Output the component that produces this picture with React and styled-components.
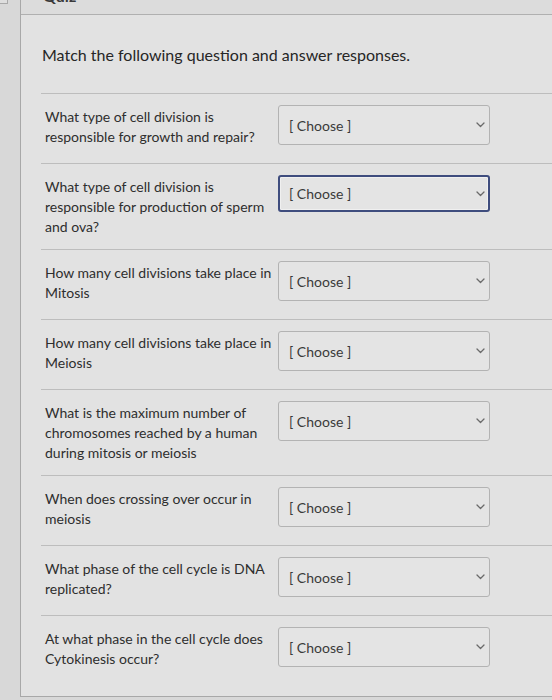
import React from "react";
import styled, { createGlobalStyle } from "styled-components";

const Global = createGlobalStyle`
  html, body { margin: 0; padding: 0; background: #d8d8d8; overflow: hidden; }
  body { font-family: Lato, "Open Sans", sans-serif; color: #2c2c2c; }
  * { box-sizing: border-box; }
`;

const Page = styled.div`
  display: flex;
  width: 552px;
  height: 700px;
  background: #d8d8d8;
`;

const Gutter = styled.div`
  width: 20px;
  flex: none;
`;

const Flag = styled.div`
  width: 8px;
  height: 4px;
  border: 1px solid #a9a9a9;
  border-top: none;
  border-left: none;
  background: #dedede;
`;

const Card = styled.div`
  flex: 1;
  height: 697px;
  background: #e2e2e2;
  border-left: 1px solid #a8a8a8;
  border-bottom: 1px solid #a8a8a8;
  display: flex;
  flex-direction: column;
`;

const Header = styled.div`
  height: 15px;
  flex: none;
  overflow: hidden;
  border-bottom: 1px solid #b0b0b0;
  background: #dcdcdc;
  display: flex;
  align-items: flex-end;
  padding-left: 22px;
  padding-bottom: 10px;
  font-weight: 700;
  font-size: 16px;
  line-height: 16px;
  color: #3a3a3a;
`;

const Body = styled.div`
  padding: 28px 0 0 20px;
`;

const Title = styled.h2`
  margin: 0 0 26px 1px;
  font-size: 16px;
  line-height: 24px;
  font-weight: 400;
  color: #262626;
`;

const Row = styled.div`
  display: grid;
  grid-template-columns: 229px 212px;
  column-gap: 4px;
  align-items: start;
  border-top: 1px solid #bdbdbd;
  padding: 13px 0 12px 4px;
`;

const Question = styled.div`
  font-size: 14px;
  line-height: 20px;
  color: #2e2e2e;
`;

const Select = styled.div`
  height: ${(p) => (p.$focused ? "37px" : "40px")};
  margin: -2px 0 6px;
  border: ${(p) => (p.$focused ? "2px solid #3f4d7e" : "1px solid #b3b3b3")};
  box-shadow: ${(p) =>
    p.$focused ? "inset 0 0 0 1px rgba(255,255,255,0.45)" : "none"};
  border-radius: 3px;
  background: #e4e4e4;
  display: flex;
  align-items: center;
  justify-content: space-between;
  padding: 0 ${(p) => (p.$focused ? "3px" : "4px")} 0 ${(p) => (p.$focused ? "9px" : "10px")};
  font-size: 14px;
  color: #3a3a3a;
`;

const Chevron = () => (
  <svg width="9" height="6" viewBox="0 0 9 6" fill="none">
    <polyline points="1,1 4.5,4.5 8,1" stroke="#6a6a6a" strokeWidth="1.3" strokeLinecap="round" strokeLinejoin="round" />
  </svg>
);

const questions = [
  "What type of cell division is responsible for growth and repair?",
  "What type of cell division is responsible for production of sperm and ova?",
  "How many cell divisions take place in Mitosis",
  "How many cell divisions take place in Meiosis",
  "What is the maximum number of chromosomes reached by a human during mitosis or meiosis",
  "When does crossing over occur in meiosis",
  "What phase of the cell cycle is DNA replicated?",
  "At what phase in the cell cycle does Cytokinesis occur?",
];

export default function App() {
  return (
    <>
      <Global />
      <Page>
        <Gutter>
          <Flag />
        </Gutter>
        <Card>
          <Header>Quiz</Header>
          <Body>
            <Title>Match the following question and answer responses.</Title>
            {questions.map((q, i) => (
              <Row key={i}>
                <Question>{q}</Question>
                <Select $focused={i === 1}>
                  <span>[ Choose ]</span>
                  <Chevron />
                </Select>
              </Row>
            ))}
          </Body>
        </Card>
      </Page>
    </>
  );
}
